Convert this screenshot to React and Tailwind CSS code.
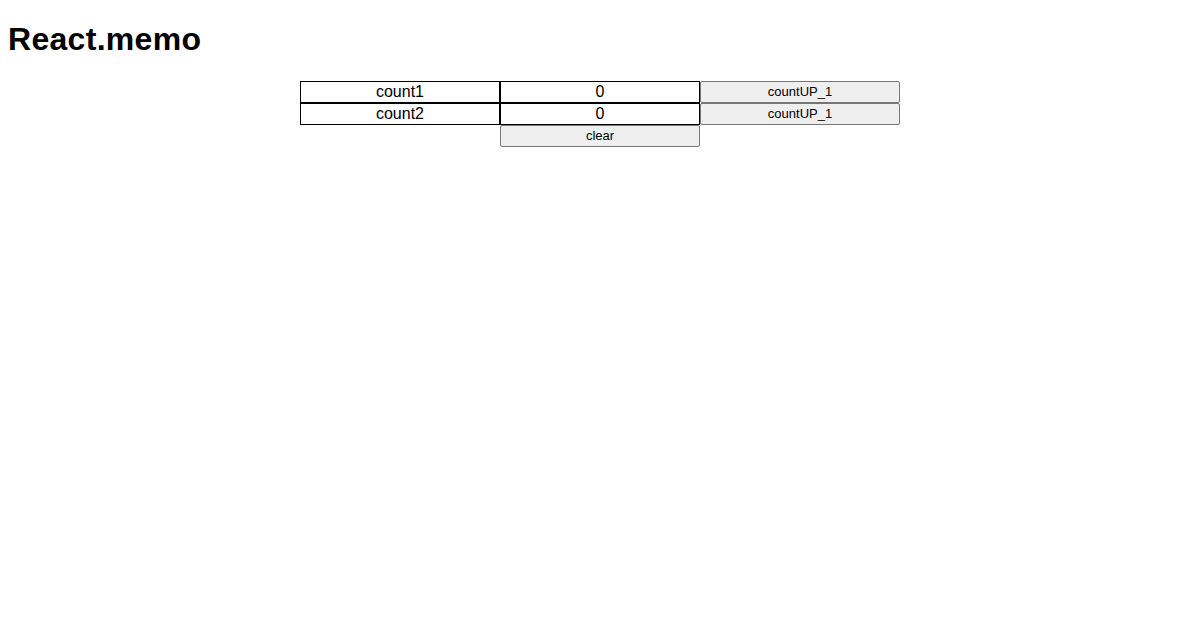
export default function App() {
  const rows = [
    { label: "count1", value: 0 },
    { label: "count2", value: 0 },
  ];

  return (
    <div className="min-h-screen bg-white px-2 text-black font-['Liberation_Sans',Arial,sans-serif]">
      <h1 className="pt-[21px] mb-[23px] text-[32px] leading-[37px] font-bold tracking-[0.3px]">React.memo</h1>

      <div className="mx-auto grid w-[600px] grid-cols-3">
        {rows.map((row) => (
          <div key={row.label} className="contents">
            <div className="flex h-[22px] items-center justify-center border border-black text-base">
              {row.label}
            </div>
            <div className="flex h-[22px] items-center justify-center border border-black text-base">
              {row.value}
            </div>
            <button className="h-[22px] rounded-[2px] border border-[#767676] bg-[#efefef] text-[13px]">
              countUP_1
            </button>
          </div>
        ))}
        <div />
        <button className="h-[22px] rounded-[2px] border border-[#767676] bg-[#efefef] text-[13px]">
          clear
        </button>
        <div />
      </div>
    </div>
  );
}
